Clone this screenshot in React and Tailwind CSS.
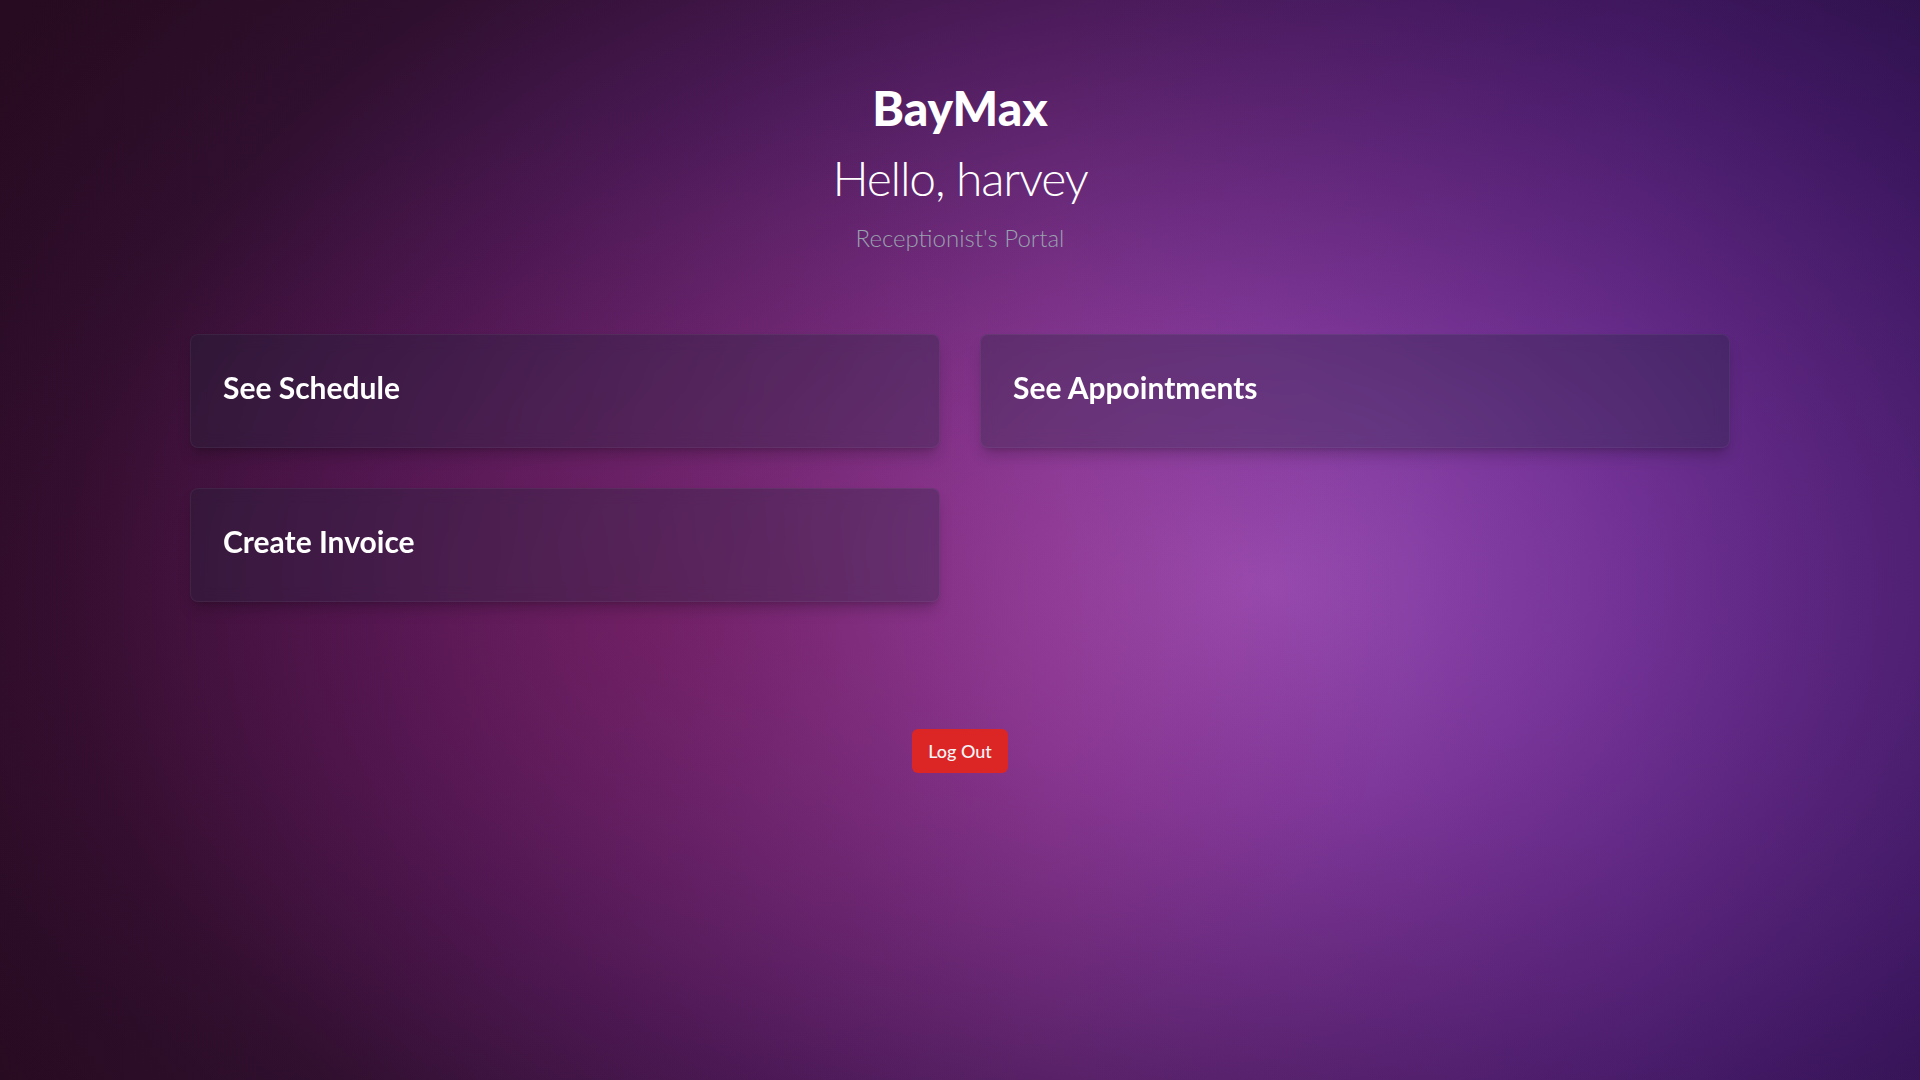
import React from "react";

const cards = ["See Schedule", "See Appointments", "Create Invoice"];

function PortalCard({ title }) {
  return (
    <button className="text-left rounded-lg border border-white/5 bg-gray-800/30 backdrop-blur-sm shadow-lg shadow-black/20 px-8 pt-[34px] pb-[42px] hover:bg-gray-800/40 transition-colors">
      <h2 className="text-3xl font-bold text-white">{title}</h2>
    </button>
  );
}

export default function App() {
  return (
    <div
      className="min-h-screen w-full text-white font-['Lato','Open_Sans',sans-serif] [background-image:radial-gradient(760px_520px_at_34%_58%,rgba(130,15,65,0.32)_0%,rgba(130,15,65,0.12)_60%,rgba(130,15,65,0)_100%),linear-gradient(to_right,rgba(60,0,30,0.12)_0%,rgba(0,0,0,0)_55%,rgba(40,20,140,0.22)_85%,rgba(30,15,110,0.32)_100%),radial-gradient(1500px_1000px_at_66%_54%,#a352b6_0%,#8a3c9c_22%,#6c2b7c_40%,#4a1a58_60%,#2e1030_80%,#240c20_100%)]"
    >
      <div className="flex flex-col items-center pt-[84px]">
        <h1 className="text-5xl font-black">BayMax</h1>
        <p className="mt-[22px] text-5xl font-light tracking-tight">Hello, harvey</p>
        <p className="mt-5 text-2xl font-light text-gray-400">
          Receptionist's Portal
        </p>

        <div className="mt-20 w-[1540px] grid grid-cols-2 gap-10">
          {cards.map((c) => (
            <PortalCard key={c} title={c} />
          ))}
        </div>

        <button className="mt-[127px] rounded-md bg-[#dc2626] px-4 py-2 text-lg font-medium text-gray-100 hover:bg-red-700">
          Log Out
        </button>
      </div>
    </div>
  );
}
